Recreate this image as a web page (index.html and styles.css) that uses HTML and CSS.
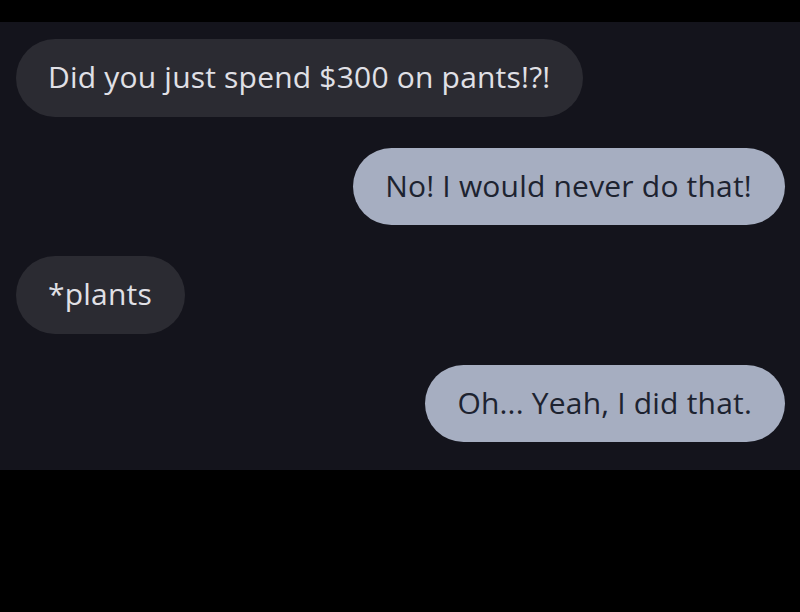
FILE: index.html
```html
<!DOCTYPE html>
<html>
<head>
<meta charset="utf-8">
<link rel="stylesheet" href="styles.css">
</head>
<body>
<div class="screen">
  <div class="chat">
    <div class="msg in">Did you just spend $300 on pants!?!</div>
    <div class="msg out">No! I would never do that!</div>
    <div class="msg in">*plants</div>
    <div class="msg out">Oh... Yeah, I did that.</div>
  </div>
</div>
</body>
</html>
```
FILE: styles.css
```css
html, body {
  margin: 0;
  padding: 0;
  background: #000;
}
.screen {
  width: 800px;
  height: 612px;
  padding-top: 22px;
  box-sizing: border-box;
}
.chat {
  background: #14141c;
  height: 448px;
  box-sizing: border-box;
  padding: 17px 15px 0 16px;
  display: flex;
  flex-direction: column;
  gap: 31px;
  font-family: "Open Sans", Roboto, sans-serif;
}
.msg {
  height: 77.5px;
  border-radius: 39px;
  padding: 0 33px 2px 32px;
  display: flex;
  align-items: center;
  font-size: 30px;
  letter-spacing: 0.2px;
  box-sizing: border-box;
  width: fit-content;
}
.in {
  background: #2b2b32;
  color: #e0e0e6;
  align-self: flex-start;
}
.out {
  background: #a6aec1;
  color: #1d2330;
  align-self: flex-end;
}
```
